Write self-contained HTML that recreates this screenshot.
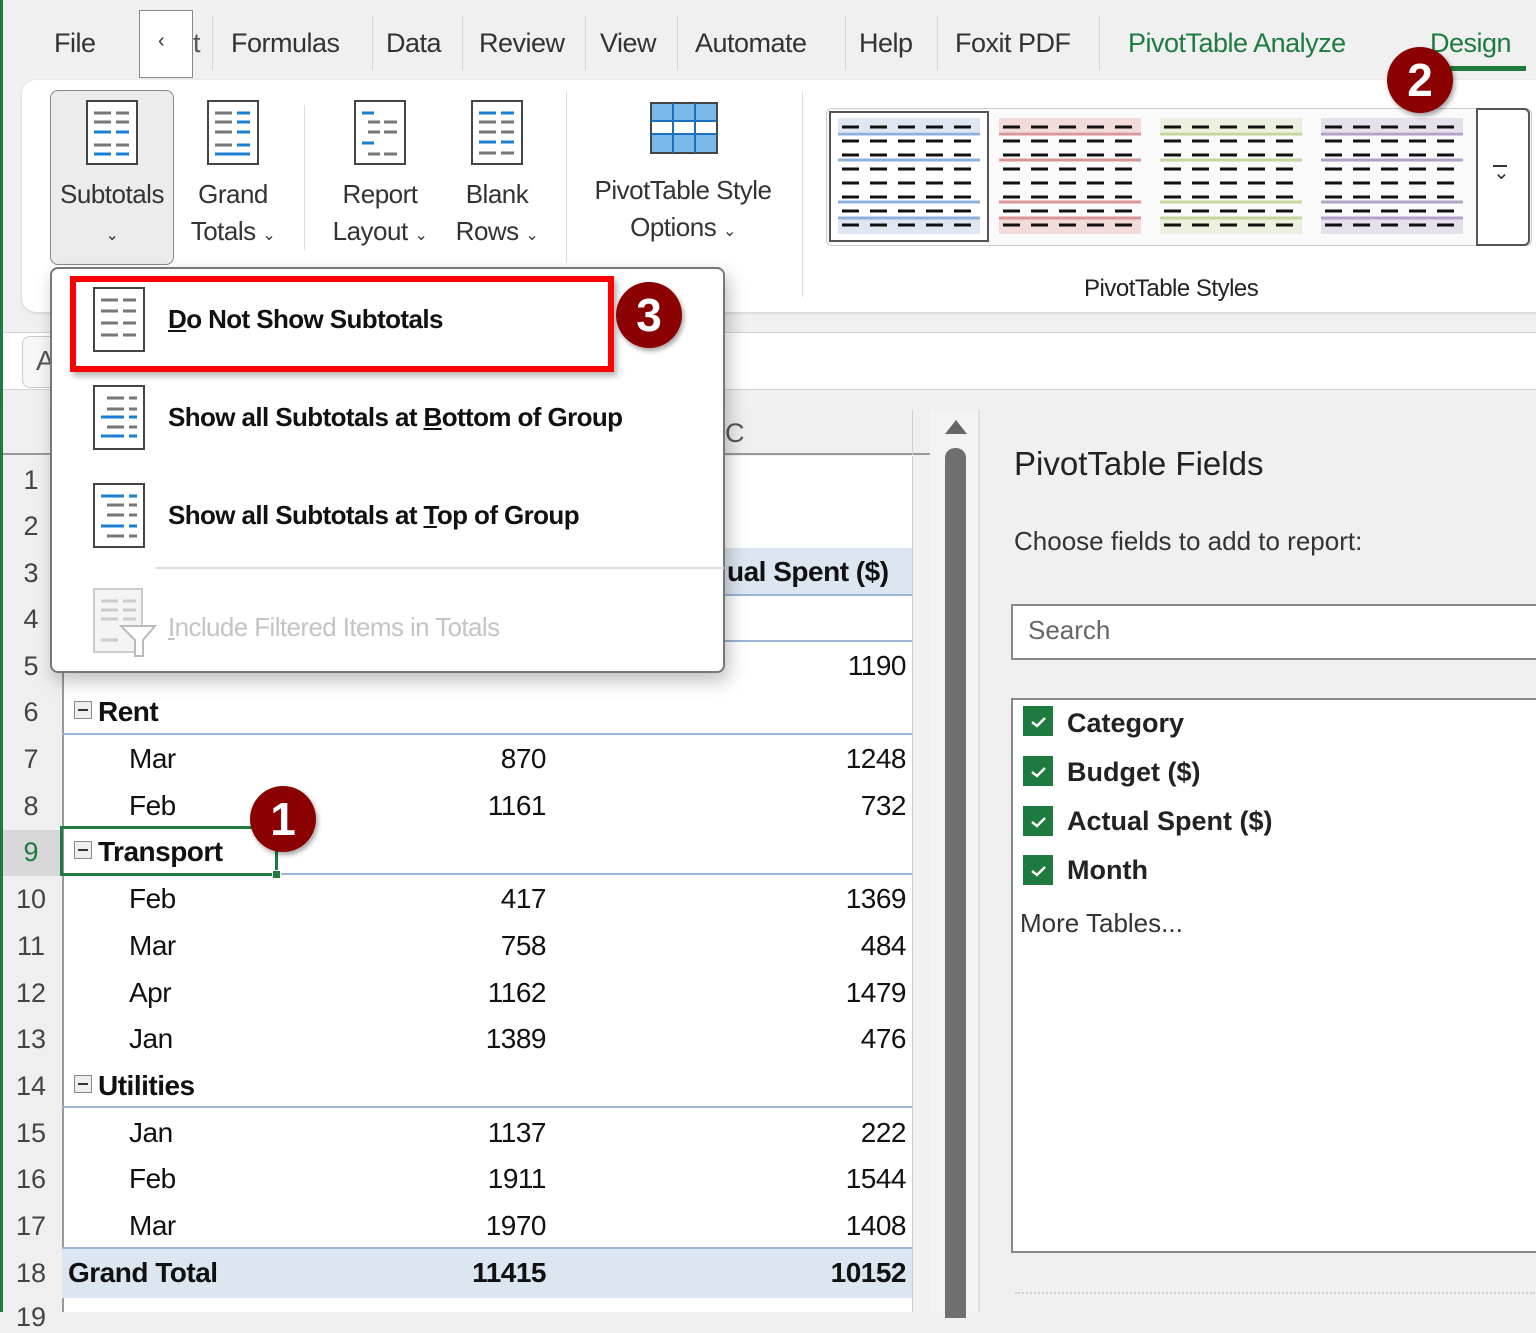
<!DOCTYPE html>
<html><head><meta charset="utf-8"><style>
*{margin:0;padding:0;box-sizing:border-box}
body{width:1536px;height:1312px;overflow:hidden;background:#f0f0f0;font-family:"Liberation Sans",sans-serif;color:#222;position:relative}
.a{position:absolute}
.tab{position:absolute;top:28px;font-size:27px;color:#333;letter-spacing:-0.5px}
.sep{position:absolute;top:16px;width:1px;height:54px;background:#d4d4d4}
.lbl{position:absolute;font-size:26px;color:#333;text-align:center;line-height:37px;letter-spacing:-0.5px}
.rn{position:absolute;left:0;width:62px;text-align:center;font-size:27px;color:#444}
.c{position:absolute;font-size:28px;color:#111;letter-spacing:-0.5px}
.r{text-align:right}
.b{font-weight:bold}
.bl{position:absolute;left:62px;width:850px;height:2px;background:#9bb5d9}
.mi{position:absolute;left:168px;font-size:26px;font-weight:bold;color:#111;letter-spacing:-0.6px}
.badge{position:absolute;width:66px;height:66px;border-radius:50%;background:#8b0000;color:#fff;font-size:46px;font-weight:bold;text-align:center;line-height:66px;box-shadow:2px 3px 5px rgba(0,0,0,.35)}
.cb{position:absolute;left:1023px;width:30px;height:30px;background:#1e7b3f}
.fl{position:absolute;left:1067px;font-size:27px;font-weight:bold;color:#222}
</style></head><body>

<!-- tabs -->
<div class="tab" style="left:54px">File</div>
<div class="a" style="left:139px;top:10px;width:54px;height:68px;background:#fff;border:1px solid #888"></div>
<div class="a" style="left:158px;top:30px;font-size:20px;color:#333">‹</div>
<div class="a" style="left:193px;top:28px;font-size:27px;color:#555">t</div>
<div class="sep" style="left:212px"></div>
<div class="tab" style="left:231px">Formulas</div>
<div class="sep" style="left:372px"></div>
<div class="tab" style="left:386px">Data</div>
<div class="sep" style="left:462px"></div>
<div class="tab" style="left:479px">Review</div>
<div class="sep" style="left:585px"></div>
<div class="tab" style="left:600px">View</div>
<div class="sep" style="left:677px"></div>
<div class="tab" style="left:695px">Automate</div>
<div class="sep" style="left:845px"></div>
<div class="tab" style="left:859px">Help</div>
<div class="sep" style="left:937px"></div>
<div class="tab" style="left:955px">Foxit PDF</div>
<div class="sep" style="left:1099px"></div>
<div class="tab" style="left:1128px;color:#1e7b3f">PivotTable Analyze</div>
<div class="tab" style="left:1430px;color:#1e7b3f">Design</div>
<div class="a" style="left:1428px;top:66px;width:98px;height:5px;background:#1e7b3f"></div>

<!-- ribbon -->
<div class="a" style="left:22px;top:80px;width:1530px;height:232px;background:#fff;border-radius:14px;box-shadow:0 1px 3px rgba(0,0,0,.15)"></div>
<div class="a" style="left:50px;top:90px;width:124px;height:175px;background:#ececec;border:1px solid #888;border-radius:8px"></div>
<svg class="a" style="left:86px;top:100px" width="52" height="66"><rect x="1" y="1" width="50" height="63" fill="#fff" stroke="#444" stroke-width="2"/><g stroke-width="3"><path d="M8 13h17M30 13h13M8 22h17M30 22h13M8 45h17M30 45h13" stroke="#777"/><path d="M8 32h17M30 32h13M8 54h17M30 54h13" stroke="#1a7fd1"/></g></svg>
<div class="lbl" style="left:50px;top:176px;width:124px">Subtotals<br><span style="font-size:16px">⌄</span></div>
<svg class="a" style="left:207px;top:100px" width="52" height="66"><rect x="1" y="1" width="50" height="63" fill="#fff" stroke="#444" stroke-width="2"/><g stroke-width="3"><path d="M8 13h17M8 22h17M8 32h17M8 45h17" stroke="#777"/><path d="M30 13h13M30 22h13M30 32h13M30 45h13M8 54h35" stroke="#1a7fd1"/></g></svg>
<div class="lbl" style="left:180px;top:176px;width:106px">Grand<br>Totals <span style="font-size:16px">⌄</span></div>
<div class="a" style="left:304px;top:105px;width:1px;height:145px;background:#ddd"></div>
<svg class="a" style="left:354px;top:100px" width="52" height="66"><rect x="1" y="1" width="50" height="63" fill="#fff" stroke="#444" stroke-width="2"/><g stroke-width="3"><path d="M8 13h12M8 43h12" stroke="#1a7fd1"/><path d="M14 22h12M30 22h13M14 32h12M30 32h13M14 54h12M30 54h13" stroke="#777"/></g></svg>
<div class="lbl" style="left:318px;top:176px;width:124px">Report<br>Layout <span style="font-size:16px">⌄</span></div>
<svg class="a" style="left:471px;top:100px" width="52" height="66"><rect x="1" y="1" width="50" height="63" fill="#fff" stroke="#444" stroke-width="2"/><g stroke-width="3"><path d="M8 13h17M30 13h13M8 42h17M30 42h13" stroke="#1a7fd1"/><path d="M8 22h17M30 22h13M8 32h17M30 32h13M8 53h17M30 53h13" stroke="#777"/></g></svg>
<div class="lbl" style="left:440px;top:176px;width:114px">Blank<br>Rows <span style="font-size:16px">⌄</span></div>
<div class="a" style="left:566px;top:92px;width:1px;height:170px;background:#ddd"></div>
<svg class="a" style="left:650px;top:102px" width="68" height="52"><rect x="1" y="1" width="66" height="50" fill="#7ab8ec" stroke="#444" stroke-width="2"/><rect x="2" y="19" width="64" height="13" fill="#fff"/><path d="M23 1v50M45 1v50M1 19h66M1 32h66" stroke="#1a6fc1" stroke-width="2"/></svg>
<div class="lbl" style="left:576px;top:172px;width:214px">PivotTable Style<br>Options <span style="font-size:16px">⌄</span></div>
<div class="a" style="left:802px;top:92px;width:1px;height:205px;background:#ddd"></div>

<!-- gallery -->
<div class="a" style="left:826px;top:108px;width:706px;height:138px;border:1px solid #ccc;border-radius:6px;background:#fafafa"></div>
<div class="a" style="left:829px;top:111px;width:160px;height:131px;border:2px solid #555;background:#fff"></div>
<svg class="a" style="left:838px;top:118px" width="625" height="118">
<defs>
<g id="d"><path d="M4 0h17M32 0h17M60 0h17M88 0h17M116 0h17" stroke="#111" stroke-width="3"/></g>
</defs>
<g><rect x="0" y="0" width="142" height="14" fill="#dde6f1"/><rect x="0" y="100" width="142" height="16" fill="#dde6f1"/><path d="M0 16h142M0 42h142M0 84h142M0 100h142" stroke="#8fb0dc" stroke-width="3"/></g>
<g transform="translate(161,0)"><rect x="0" y="0" width="142" height="14" fill="#f2dcdb"/><rect x="0" y="100" width="142" height="16" fill="#f2dcdb"/><path d="M0 16h142M0 42h142M0 84h142M0 100h142" stroke="#d99694" stroke-width="3"/></g>
<g transform="translate(322,0)"><rect x="0" y="0" width="142" height="14" fill="#ebf1de"/><rect x="0" y="100" width="142" height="16" fill="#ebf1de"/><path d="M0 16h142M0 42h142M0 84h142M0 100h142" stroke="#c3d69b" stroke-width="3"/></g>
<g transform="translate(483,0)"><rect x="0" y="0" width="142" height="14" fill="#e5e0ec"/><rect x="0" y="100" width="142" height="16" fill="#e5e0ec"/><path d="M0 16h142M0 42h142M0 84h142M0 100h142" stroke="#b2a2c7" stroke-width="3"/></g>
<g>
<use href="#d" y="9"/><use href="#d" y="23"/><use href="#d" y="37"/><use href="#d" y="51"/><use href="#d" y="65"/><use href="#d" y="79"/><use href="#d" y="93"/><use href="#d" y="107"/>
<use href="#d" x="161" y="9"/><use href="#d" x="161" y="23"/><use href="#d" x="161" y="37"/><use href="#d" x="161" y="51"/><use href="#d" x="161" y="65"/><use href="#d" x="161" y="79"/><use href="#d" x="161" y="93"/><use href="#d" x="161" y="107"/>
<use href="#d" x="322" y="9"/><use href="#d" x="322" y="23"/><use href="#d" x="322" y="37"/><use href="#d" x="322" y="51"/><use href="#d" x="322" y="65"/><use href="#d" x="322" y="79"/><use href="#d" x="322" y="93"/><use href="#d" x="322" y="107"/>
<use href="#d" x="483" y="9"/><use href="#d" x="483" y="23"/><use href="#d" x="483" y="37"/><use href="#d" x="483" y="51"/><use href="#d" x="483" y="65"/><use href="#d" x="483" y="79"/><use href="#d" x="483" y="93"/><use href="#d" x="483" y="107"/>
</g></svg>
<div class="a" style="left:1476px;top:108px;width:54px;height:138px;border:2px solid #555;border-radius:0 6px 6px 0;background:#fff"></div>
<div class="a" style="left:1493px;top:160px;font-size:20px;color:#333">⌄</div>
<div class="a" style="left:1493px;top:165px;width:14px;height:2px;background:#333"></div>
<div class="a" style="left:1084px;top:275px;font-size:24px;color:#222;letter-spacing:-0.5px">PivotTable Styles</div>

<!-- formula bar -->
<div class="a" style="left:0;top:332px;width:1536px;height:58px;background:#fff;border-top:1px solid #d4d4d4;border-bottom:1px solid #d4d4d4"></div>
<div class="a" style="left:22px;top:336px;width:40px;height:52px;border:1px solid #ccc;border-radius:8px 0 0 8px;background:#f7f7f7"></div>
<div class="a" style="left:36px;top:345px;font-size:28px;color:#555">A</div>

<!-- grid -->
<div class="a" style="left:0;top:410px;width:930px;height:45px;background:#efefef;border-bottom:2px solid #999"></div>
<div class="a" style="left:725px;top:418px;font-size:27px;color:#555">C</div>
<div class="a" style="left:912px;top:410px;width:1px;height:45px;background:#ccc"></div>
<div class="a" style="left:62px;top:456px;width:850px;height:856px;background:#fff;border-left:2px solid #999"></div>
<div class="a" style="left:0;top:456px;width:60px;height:856px;background:#efefef"></div>
<div class="a" style="left:912px;top:456px;width:18px;height:856px;background:#f0f0f0;border-left:1px solid #ccc"></div>

<div class="rn" style="top:465px">1</div><div class="rn" style="top:511px">2</div><div class="rn" style="top:558px">3</div><div class="rn" style="top:604px">4</div><div class="rn" style="top:651px">5</div><div class="rn" style="top:697px">6</div><div class="rn" style="top:744px">7</div><div class="rn" style="top:791px">8</div>
<div class="a" style="left:0;top:830px;width:60px;height:46px;background:#d8d8d8"></div>
<div class="rn" style="top:837px;color:#1e7b3f">9</div><div class="rn" style="top:884px">10</div><div class="rn" style="top:931px">11</div><div class="rn" style="top:978px">12</div><div class="rn" style="top:1024px">13</div><div class="rn" style="top:1071px">14</div><div class="rn" style="top:1118px">15</div><div class="rn" style="top:1164px">16</div><div class="rn" style="top:1211px">17</div><div class="rn" style="top:1258px">18</div><div class="rn" style="top:1302px">19</div>

<div class="a" style="left:725px;top:548px;width:187px;height:46px;background:#dce6f1"></div>
<div class="bl" style="left:725px;width:187px;top:594px"></div>
<div class="c b" style="left:727px;top:556px">ual Spent ($)</div>
<div class="bl" style="top:640px"></div>
<div class="c r" style="left:700px;width:206px;top:650px">1190</div>
<div class="a" style="left:74px;top:701px;width:18px;height:18px;border:1px solid #888;background:#eee"></div><div class="a" style="left:78px;top:709px;width:10px;height:2px;background:#333"></div>
<div class="c b" style="left:98px;top:696px">Rent</div>
<div class="bl" style="top:733px"></div>
<div class="c" style="left:129px;top:743px">Mar</div><div class="c r" style="left:340px;width:206px;top:743px">870</div><div class="c r" style="left:700px;width:206px;top:743px">1248</div>
<div class="c" style="left:129px;top:790px">Feb</div><div class="c r" style="left:340px;width:206px;top:790px">1161</div><div class="c r" style="left:700px;width:206px;top:790px">732</div>
<div class="a" style="left:74px;top:841px;width:18px;height:18px;border:1px solid #888;background:#eee"></div><div class="a" style="left:78px;top:849px;width:10px;height:2px;background:#333"></div>
<div class="c b" style="left:98px;top:836px">Transport</div>
<div class="bl" style="top:873px"></div>
<div class="a" style="left:60px;top:826px;width:218px;height:50px;border:3px solid #1e7b3f"></div>
<div class="a" style="left:272px;top:870px;width:9px;height:9px;background:#1e7b3f;border:1px solid #fff"></div>
<div class="c" style="left:129px;top:883px">Feb</div><div class="c r" style="left:340px;width:206px;top:883px">417</div><div class="c r" style="left:700px;width:206px;top:883px">1369</div>
<div class="c" style="left:129px;top:930px">Mar</div><div class="c r" style="left:340px;width:206px;top:930px">758</div><div class="c r" style="left:700px;width:206px;top:930px">484</div>
<div class="c" style="left:129px;top:977px">Apr</div><div class="c r" style="left:340px;width:206px;top:977px">1162</div><div class="c r" style="left:700px;width:206px;top:977px">1479</div>
<div class="c" style="left:129px;top:1023px">Jan</div><div class="c r" style="left:340px;width:206px;top:1023px">1389</div><div class="c r" style="left:700px;width:206px;top:1023px">476</div>
<div class="a" style="left:74px;top:1075px;width:18px;height:18px;border:1px solid #888;background:#eee"></div><div class="a" style="left:78px;top:1083px;width:10px;height:2px;background:#333"></div>
<div class="c b" style="left:98px;top:1070px">Utilities</div>
<div class="bl" style="top:1106px"></div>
<div class="c" style="left:129px;top:1117px">Jan</div><div class="c r" style="left:340px;width:206px;top:1117px">1137</div><div class="c r" style="left:700px;width:206px;top:1117px">222</div>
<div class="c" style="left:129px;top:1163px">Feb</div><div class="c r" style="left:340px;width:206px;top:1163px">1911</div><div class="c r" style="left:700px;width:206px;top:1163px">1544</div>
<div class="c" style="left:129px;top:1210px">Mar</div><div class="c r" style="left:340px;width:206px;top:1210px">1970</div><div class="c r" style="left:700px;width:206px;top:1210px">1408</div>
<div class="a" style="left:62px;top:1247px;width:850px;height:51px;background:#dce6f1;border-top:2px solid #9bb5d9"></div>
<div class="c b" style="left:68px;top:1257px">Grand Total</div><div class="c b r" style="left:340px;width:206px;top:1257px">11415</div><div class="c b r" style="left:700px;width:206px;top:1257px">10152</div>

<!-- scrollbar -->
<div class="a" style="left:930px;top:410px;width:50px;height:902px;background:#f3f3f3;border-right:2px solid #ddd"></div>
<div class="a" style="left:945px;top:420px;width:0;height:0;border-left:11px solid transparent;border-right:11px solid transparent;border-bottom:14px solid #666"></div>
<div class="a" style="left:945px;top:448px;width:21px;height:870px;background:#6f6f6f;border-radius:10px 10px 0 0"></div>

<!-- right pane -->
<div class="a" style="left:1014px;top:445px;font-size:33px;color:#222">PivotTable Fields</div>
<div class="a" style="left:1014px;top:526px;font-size:26px;color:#333">Choose fields to add to report:</div>
<div class="a" style="left:1011px;top:604px;width:540px;height:56px;background:#fff;border:2px solid #888"></div>
<div class="a" style="left:1028px;top:615px;font-size:26px;color:#666">Search</div>
<div class="a" style="left:1011px;top:698px;width:540px;height:555px;background:#fff;border:2px solid #888"></div>
<div class="cb" style="top:706px"></div><div class="fl" style="top:708px">Category</div>
<div class="cb" style="top:756px"></div><div class="fl" style="top:757px">Budget ($)</div>
<div class="cb" style="top:806px"></div><div class="fl" style="top:806px">Actual Spent ($)</div>
<div class="cb" style="top:855px"></div><div class="fl" style="top:855px">Month</div>
<svg class="a" style="left:1023px;top:706px" width="30" height="180"><g stroke="#fff" stroke-width="2.5" fill="none"><path d="M9 16l5 4 8-8"/><path d="M9 66l5 4 8-8"/><path d="M9 116l5 4 8-8"/><path d="M9 165l5 4 8-8"/></g></svg>
<div class="a" style="left:1020px;top:908px;font-size:26px;color:#333">More Tables...</div>
<div class="a" style="left:1015px;top:1292px;width:520px;border-top:2px dotted #ccc"></div>

<!-- dropdown menu -->
<div class="a" style="left:50px;top:267px;width:675px;height:406px;background:#fff;border:2px solid #777;border-radius:8px;box-shadow:4px 8px 18px rgba(0,0,0,.25)"></div>
<svg class="a" style="left:93px;top:287px" width="52" height="66"><rect x="1" y="1" width="50" height="63" fill="#fff" stroke="#444" stroke-width="2"/><path d="M8 13h17M30 13h13M8 24h17M30 24h13M8 36h17M30 36h13M8 48h17M30 48h13" stroke="#777" stroke-width="3"/></svg>
<div class="mi" style="left:168px;top:304px"><u>D</u>o Not Show Subtotals</div>
<div class="a" style="left:70px;top:276px;width:544px;height:96px;border:6px solid #f00;box-shadow:3px 4px 6px rgba(0,0,0,.3)"></div>
<svg class="a" style="left:93px;top:385px" width="52" height="66"><rect x="1" y="1" width="50" height="63" fill="#fff" stroke="#444" stroke-width="2"/><g stroke-width="3"><path d="M14 13h17M36 13h8M14 24h17M36 24h8M14 42h17M36 42h8" stroke="#777"/><path d="M8 32h23M36 32h8M8 51h23M36 51h8" stroke="#1a7fd1"/></g></svg>
<div class="mi" style="top:402px">Show all Subtotals at <u>B</u>ottom of Group</div>
<svg class="a" style="left:93px;top:483px" width="52" height="66"><rect x="1" y="1" width="50" height="63" fill="#fff" stroke="#444" stroke-width="2"/><g stroke-width="3"><path d="M8 13h23M36 13h8M8 43h23M36 43h8" stroke="#1a7fd1"/><path d="M14 22h17M36 22h8M14 32h17M36 32h8M14 53h17M36 53h8" stroke="#777"/></g></svg>
<div class="mi" style="top:500px">Show all Subtotals at <u>T</u>op of Group</div>
<div class="a" style="left:156px;top:567px;width:568px;height:2px;background:#ddd"></div>
<svg class="a" style="left:93px;top:588px" width="64" height="70"><rect x="1" y="1" width="48" height="63" fill="#f4f4f4" stroke="#ccc" stroke-width="2"/><path d="M8 13h17M30 13h13M8 22h17M30 22h13M8 31h17M30 31h13M8 52h17" stroke="#ccc" stroke-width="3"/><path d="M28 38h34l-12 14v16h-8v-16z" fill="#fff" stroke="#bbb" stroke-width="2"/></svg>
<div class="mi" style="top:612px;color:#c4c4c4;font-weight:normal"><u>I</u>nclude Filtered Items in Totals</div>

<!-- badges -->
<div class="badge" style="left:250px;top:786px">1</div>
<div class="badge" style="left:1387px;top:47px">2</div>
<div class="badge" style="left:616px;top:282px">3</div>

<div class="a" style="left:0;top:0;width:3px;height:1312px;background:#1e7b3f"></div>
</body></html>
